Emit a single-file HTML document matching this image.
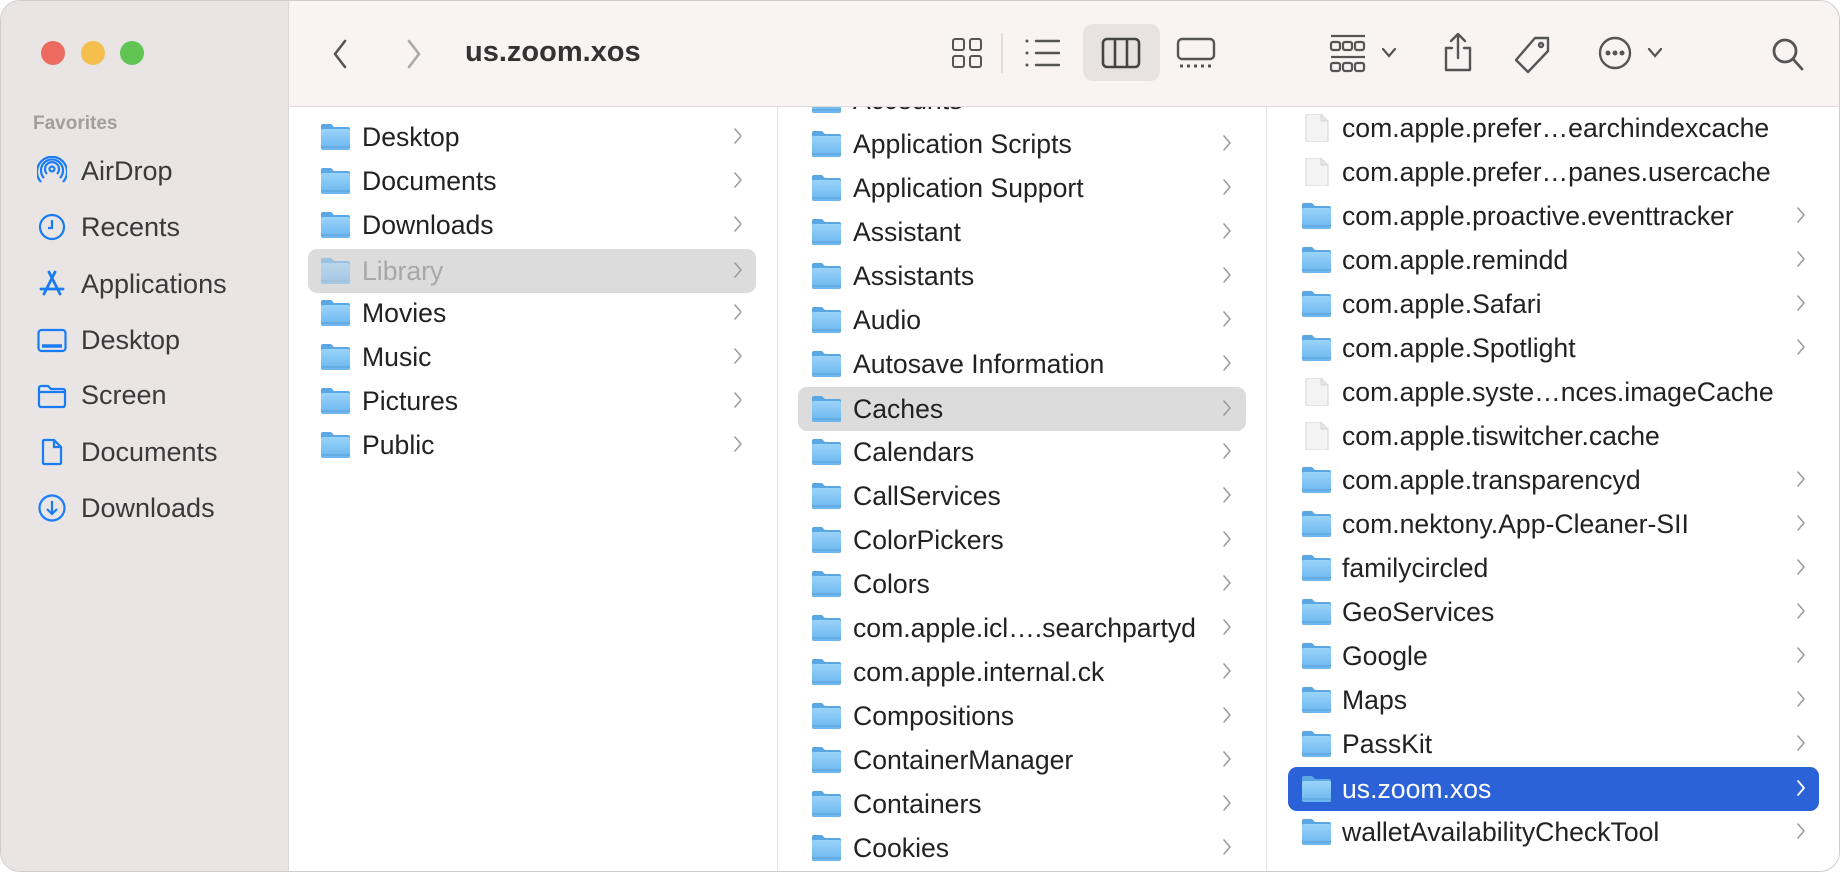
<!DOCTYPE html>
<html><head><meta charset="utf-8"><style>
*{margin:0;padding:0;box-sizing:border-box}
body{width:1840px;height:872px;background:#fff;font-family:"Liberation Sans",sans-serif;overflow:hidden;position:relative}
.win{position:absolute;left:0;top:0;width:1840px;height:872px;border-radius:20px;overflow:hidden;border:1px solid #cfcccb;background:#fff}
.side{position:absolute;left:0;top:0;width:288px;height:872px;background:#e8e5e4;border-right:1px solid #dad7d6}
.tl{position:absolute;top:40px;width:24px;height:24px;border-radius:50%}
.fav{position:absolute;left:32px;top:112px;font-size:19px;color:#a19e9d;font-weight:bold}
.si{position:absolute;left:36px;height:40px;display:flex;align-items:center;font-size:27px;color:#3a3a3a}
.si svg{width:30px;height:30px;margin-right:14px}
.tb{position:absolute;left:288px;top:0;right:0;height:106px;background:#f7f4f3;border-bottom:1px solid #dedbda}
.ic{position:absolute}
.col{position:absolute;top:106px;bottom:0;border-right:1px solid #e4e4e4;overflow:hidden}
.r{position:absolute;height:44px;display:flex;align-items:center;font-size:26.6px;color:#222}
.r .f{position:absolute;width:31px;height:28px;top:8px}
.r .t{position:absolute}
.r .c{position:absolute;top:12px;width:10px;height:18px}
.sel{background:#dcdcdc;border-radius:9px}
.blue{background:#2b62d8;border-radius:9px;color:#fff}
</style></head><body>
<svg width="0" height="0" style="position:absolute">
<defs>
<linearGradient id="fg" x1="0" y1="0" x2="0" y2="1"><stop offset="0" stop-color="#9ad3fa"/><stop offset="1" stop-color="#6ab6ee"/></linearGradient>
<symbol id="fold" viewBox="0 0 31 28"><path d="M1 3a2 2 0 0 1 2-2h8l3 3h14a2 2 0 0 1 2 2v19a2 2 0 0 1-2 2H3a2 2 0 0 1-2-2z" fill="#5aa7e4"/><path d="M1 8a2 2 0 0 1 2-2h25a2 2 0 0 1 2 2v17a2 2 0 0 1-2 2H3a2 2 0 0 1-2-2z" fill="url(#fg)"/><path d="M1 24h29" stroke="#5a9ed8" stroke-width="1"/></symbol>
<symbol id="doc" viewBox="0 0 31 28"><path d="M5 0h15l7 7v21H5z" fill="#f3f3f3" stroke="#d6d6d6"/><path d="M20 0v7h7" fill="#e4e4e4" stroke="#d6d6d6"/></symbol>
<symbol id="chev" viewBox="0 0 10 18"><path d="M2 2l6 7-6 7" fill="none" stroke="#9a9a9a" stroke-width="1.5" stroke-linecap="round" stroke-linejoin="round"/></symbol>
<symbol id="chevw" viewBox="0 0 10 18"><path d="M2 2l6 7-6 7" fill="none" stroke="#fff" stroke-width="1.8" stroke-linecap="round" stroke-linejoin="round"/></symbol>
</defs></svg>
<div class="win">
<div class="side">
<div class="tl" style="left:40px;background:#ec6a5e"></div>
<div class="tl" style="left:80px;background:#f4bf4f"></div>
<div class="tl" style="left:119px;background:#61c554"></div>
<div class="fav">Favorites</div>
<div class="si" style="top:150px"><svg viewBox="0 0 30 30" fill="none" stroke="#1a7cf4" stroke-width="2.2"><circle cx="15" cy="13" r="2.5"/><path d="M10 18a7 7 0 1 1 10 0M7 22a11 11 0 1 1 16 0M4 26a15 15 0 1 1 22 0"/></svg>AirDrop</div>
<div class="si" style="top:206px"><svg viewBox="0 0 30 30" fill="none" stroke="#1a7cf4" stroke-width="2.2"><circle cx="15" cy="15" r="12"/><path d="M15 8v8h-4"/></svg>Recents</div>
<div class="si" style="top:263px"><svg viewBox="0 0 30 30" fill="none" stroke="#1a7cf4" stroke-width="2.8" stroke-linecap="round"><path d="M12 3l11 22M18 3L7 25M4 20h22"/></svg>Applications</div>
<div class="si" style="top:319px"><svg viewBox="0 0 30 30" fill="none" stroke="#1a7cf4" stroke-width="2.2"><rect x="1.5" y="5" width="27" height="21" rx="3"/><path d="M5 21h20" stroke-width="3.5"/></svg>Desktop</div>
<div class="si" style="top:374px"><svg viewBox="0 0 30 30" fill="none" stroke="#1a7cf4" stroke-width="2.2"><path d="M2 8a2 2 0 0 1 2-2h7l3 3h12a2 2 0 0 1 2 2v14a2 2 0 0 1-2 2H4a2 2 0 0 1-2-2zM2 12h26"/></svg>Screen</div>
<div class="si" style="top:431px"><svg viewBox="0 0 30 30" fill="none" stroke="#1a7cf4" stroke-width="2.2"><path d="M7 3h10l7 7v16a1 1 0 0 1-1 1H7a1 1 0 0 1-1-1V4a1 1 0 0 1 1-1zM17 3v7h7"/></svg>Documents</div>
<div class="si" style="top:487px"><svg viewBox="0 0 30 30" fill="none" stroke="#1a7cf4" stroke-width="2.2"><circle cx="15" cy="15" r="12.5"/><path d="M15 8v13M10 16l5 5 5-5"/></svg>Downloads</div>
</div>
<div class="tb">
<svg class="ic" style="left:43px;top:38px" width="16" height="30" viewBox="0 0 16 30"><path d="M13 2L3 15l10 13" fill="none" stroke="#555" stroke-width="2.6" stroke-linecap="round" stroke-linejoin="round"/></svg>
<svg class="ic" style="left:117px;top:38px" width="16" height="30" viewBox="0 0 16 30"><path d="M3 2l10 13L3 28" fill="none" stroke="#aaa" stroke-width="2.6" stroke-linecap="round" stroke-linejoin="round"/></svg>
<div class="ic" style="left:176px;top:35px;font-size:29px;font-weight:bold;color:#333">us.zoom.xos</div>
<svg class="ic" style="left:662px;top:36px" width="32" height="32" viewBox="0 0 32 32" fill="none" stroke="#555" stroke-width="2"><rect x="2" y="2" width="11" height="11" rx="2"/><rect x="19" y="2" width="11" height="11" rx="2"/><rect x="2" y="19" width="11" height="11" rx="2"/><rect x="19" y="19" width="11" height="11" rx="2"/></svg>
<div class="ic" style="left:712px;top:32px;width:2px;height:40px;background:#e0dddc"></div>
<svg class="ic" style="left:736px;top:36px" width="36" height="32" viewBox="0 0 36 32" stroke="#555" stroke-width="3" stroke-linecap="round"><path d="M2 4h0M2 16h0M2 28h0"/><path d="M11 4h23M11 16h23M11 28h23" stroke-width="2.4"/></svg>
<div class="ic" style="left:794px;top:23px;width:77px;height:57px;background:#e6e3e2;border-radius:10px"></div>
<svg class="ic" style="left:812px;top:36px" width="40" height="32" viewBox="0 0 40 32" fill="none" stroke="#444" stroke-width="2.6"><rect x="2" y="2" width="36" height="28" rx="4"/><path d="M14 2v28M26 2v28"/></svg>
<svg class="ic" style="left:887px;top:36px" width="40" height="32" viewBox="0 0 40 32" fill="none" stroke="#555" stroke-width="2.4"><rect x="2" y="2" width="36" height="20" rx="4"/><path d="M4 29h3M11 29h3M18 29h3M25 29h3M32 29h3" stroke-width="3"/></svg>
<svg class="ic" style="left:1040px;top:32px" width="40" height="40" viewBox="0 0 40 40" fill="none" stroke="#555" stroke-width="2.2"><path d="M2 3h34"/><rect x="2" y="9" width="9" height="8" rx="2"/><rect x="14" y="9" width="9" height="8" rx="2"/><rect x="26" y="9" width="9" height="8" rx="2"/><path d="M2 24h34"/><rect x="2" y="30" width="9" height="8" rx="2"/><rect x="14" y="30" width="9" height="8" rx="2"/><rect x="26" y="30" width="9" height="8" rx="2"/></svg>
<svg class="ic" style="left:1092px;top:46px" width="16" height="12" viewBox="0 0 16 12"><path d="M2 2l6 7 6-7" fill="none" stroke="#555" stroke-width="2.2" stroke-linecap="round"/></svg>
<svg class="ic" style="left:1152px;top:30px" width="34" height="42" viewBox="0 0 34 42" fill="none" stroke="#555" stroke-width="2.4" stroke-linecap="round" stroke-linejoin="round"><path d="M17 3v24M10 10l7-7 7 7M11 17H5v22h24V17h-6"/></svg>
<svg class="ic" style="left:1224px;top:34px" width="40" height="40" viewBox="0 0 40 40" fill="none" stroke="#555" stroke-width="2.4" stroke-linejoin="round"><path d="M22 3h13v13L15 37 3 25z"/><circle cx="28" cy="10" r="2"/></svg>
<svg class="ic" style="left:1308px;top:34px" width="36" height="36" viewBox="0 0 36 36" fill="none" stroke="#555" stroke-width="2.4"><circle cx="18" cy="18" r="15"/><circle cx="11" cy="18" r="1.3" fill="#555"/><circle cx="18" cy="18" r="1.3" fill="#555"/><circle cx="25" cy="18" r="1.3" fill="#555"/></svg>
<svg class="ic" style="left:1358px;top:46px" width="16" height="12" viewBox="0 0 16 12"><path d="M2 2l6 7 6-7" fill="none" stroke="#555" stroke-width="2.2" stroke-linecap="round"/></svg>
<svg class="ic" style="left:1482px;top:36px" width="34" height="34" viewBox="0 0 34 34" fill="none" stroke="#555" stroke-width="2.8" stroke-linecap="round"><circle cx="14" cy="14" r="11"/><path d="M22 22l9 10"/></svg>
</div>

<div class="col" style="left:288px;width:489px">
<div class="r sel" style="left:19px;width:448px;top:142px"></div>
<div class="r" style="left:0;width:489px;top:8px"><svg class="f" style="left:31px"><use href="#fold"/></svg><span class="t" style="left:73px">Desktop</span><svg class="c" style="left:444px"><use href="#chev"/></svg></div>
<div class="r" style="left:0;width:489px;top:52px"><svg class="f" style="left:31px"><use href="#fold"/></svg><span class="t" style="left:73px">Documents</span><svg class="c" style="left:444px"><use href="#chev"/></svg></div>
<div class="r" style="left:0;width:489px;top:96px"><svg class="f" style="left:31px"><use href="#fold"/></svg><span class="t" style="left:73px">Downloads</span><svg class="c" style="left:444px"><use href="#chev"/></svg></div>
<div class="r" style="left:0;width:489px;top:142px"><svg class="f" style="left:31px;opacity:.5"><use href="#fold"/></svg><span class="t" style="left:73px;color:#a8a8a8">Library</span><svg class="c" style="left:444px"><use href="#chev"/></svg></div>
<div class="r" style="left:0;width:489px;top:184px"><svg class="f" style="left:31px"><use href="#fold"/></svg><span class="t" style="left:73px">Movies</span><svg class="c" style="left:444px"><use href="#chev"/></svg></div>
<div class="r" style="left:0;width:489px;top:228px"><svg class="f" style="left:31px"><use href="#fold"/></svg><span class="t" style="left:73px">Music</span><svg class="c" style="left:444px"><use href="#chev"/></svg></div>
<div class="r" style="left:0;width:489px;top:272px"><svg class="f" style="left:31px"><use href="#fold"/></svg><span class="t" style="left:73px">Pictures</span><svg class="c" style="left:444px"><use href="#chev"/></svg></div>
<div class="r" style="left:0;width:489px;top:316px"><svg class="f" style="left:31px"><use href="#fold"/></svg><span class="t" style="left:73px">Public</span><svg class="c" style="left:444px"><use href="#chev"/></svg></div>
</div>

<div class="col" style="left:777px;width:489px">
<div class="r sel" style="left:20px;width:448px;top:280px"></div>
<div class="r" style="top:-29px;width:489px"><svg class="f" style="left:33px"><use href="#fold"/></svg><span class="t" style="left:75px">Accounts</span><svg class="c" style="left:444px"><use href="#chev"/></svg></div>
<div class="r" style="top:15px;width:489px"><svg class="f" style="left:33px"><use href="#fold"/></svg><span class="t" style="left:75px">Application Scripts</span><svg class="c" style="left:444px"><use href="#chev"/></svg></div>
<div class="r" style="top:59px;width:489px"><svg class="f" style="left:33px"><use href="#fold"/></svg><span class="t" style="left:75px">Application Support</span><svg class="c" style="left:444px"><use href="#chev"/></svg></div>
<div class="r" style="top:103px;width:489px"><svg class="f" style="left:33px"><use href="#fold"/></svg><span class="t" style="left:75px">Assistant</span><svg class="c" style="left:444px"><use href="#chev"/></svg></div>
<div class="r" style="top:147px;width:489px"><svg class="f" style="left:33px"><use href="#fold"/></svg><span class="t" style="left:75px">Assistants</span><svg class="c" style="left:444px"><use href="#chev"/></svg></div>
<div class="r" style="top:191px;width:489px"><svg class="f" style="left:33px"><use href="#fold"/></svg><span class="t" style="left:75px">Audio</span><svg class="c" style="left:444px"><use href="#chev"/></svg></div>
<div class="r" style="top:235px;width:489px"><svg class="f" style="left:33px"><use href="#fold"/></svg><span class="t" style="left:75px">Autosave Information</span><svg class="c" style="left:444px"><use href="#chev"/></svg></div>
<div class="r" style="top:280px;width:489px"><svg class="f" style="left:33px"><use href="#fold"/></svg><span class="t" style="left:75px">Caches</span><svg class="c" style="left:444px"><use href="#chev"/></svg></div>
<div class="r" style="top:323px;width:489px"><svg class="f" style="left:33px"><use href="#fold"/></svg><span class="t" style="left:75px">Calendars</span><svg class="c" style="left:444px"><use href="#chev"/></svg></div>
<div class="r" style="top:367px;width:489px"><svg class="f" style="left:33px"><use href="#fold"/></svg><span class="t" style="left:75px">CallServices</span><svg class="c" style="left:444px"><use href="#chev"/></svg></div>
<div class="r" style="top:411px;width:489px"><svg class="f" style="left:33px"><use href="#fold"/></svg><span class="t" style="left:75px">ColorPickers</span><svg class="c" style="left:444px"><use href="#chev"/></svg></div>
<div class="r" style="top:455px;width:489px"><svg class="f" style="left:33px"><use href="#fold"/></svg><span class="t" style="left:75px">Colors</span><svg class="c" style="left:444px"><use href="#chev"/></svg></div>
<div class="r" style="top:499px;width:489px"><svg class="f" style="left:33px"><use href="#fold"/></svg><span class="t" style="left:75px">com.apple.icl….searchpartyd</span><svg class="c" style="left:444px"><use href="#chev"/></svg></div>
<div class="r" style="top:543px;width:489px"><svg class="f" style="left:33px"><use href="#fold"/></svg><span class="t" style="left:75px">com.apple.internal.ck</span><svg class="c" style="left:444px"><use href="#chev"/></svg></div>
<div class="r" style="top:587px;width:489px"><svg class="f" style="left:33px"><use href="#fold"/></svg><span class="t" style="left:75px">Compositions</span><svg class="c" style="left:444px"><use href="#chev"/></svg></div>
<div class="r" style="top:631px;width:489px"><svg class="f" style="left:33px"><use href="#fold"/></svg><span class="t" style="left:75px">ContainerManager</span><svg class="c" style="left:444px"><use href="#chev"/></svg></div>
<div class="r" style="top:675px;width:489px"><svg class="f" style="left:33px"><use href="#fold"/></svg><span class="t" style="left:75px">Containers</span><svg class="c" style="left:444px"><use href="#chev"/></svg></div>
<div class="r" style="top:719px;width:489px"><svg class="f" style="left:33px"><use href="#fold"/></svg><span class="t" style="left:75px">Cookies</span><svg class="c" style="left:444px"><use href="#chev"/></svg></div>
</div>

<div class="col" style="left:1266px;width:574px;border-right:none">
<div class="r blue" style="left:21px;width:531px;top:660px"></div>
<div class="r" style="top:-1px;width:574px"><svg class="f" style="left:34px"><use href="#doc"/></svg><span class="t" style="left:75px">com.apple.prefer…earchindexcache</span></div>
<div class="r" style="top:43px;width:574px"><svg class="f" style="left:34px"><use href="#doc"/></svg><span class="t" style="left:75px">com.apple.prefer…panes.usercache</span></div>
<div class="r" style="top:87px;width:574px"><svg class="f" style="left:34px"><use href="#fold"/></svg><span class="t" style="left:75px">com.apple.proactive.eventtracker</span><svg class="c" style="left:529px"><use href="#chev"/></svg></div>
<div class="r" style="top:131px;width:574px"><svg class="f" style="left:34px"><use href="#fold"/></svg><span class="t" style="left:75px">com.apple.remindd</span><svg class="c" style="left:529px"><use href="#chev"/></svg></div>
<div class="r" style="top:175px;width:574px"><svg class="f" style="left:34px"><use href="#fold"/></svg><span class="t" style="left:75px">com.apple.Safari</span><svg class="c" style="left:529px"><use href="#chev"/></svg></div>
<div class="r" style="top:219px;width:574px"><svg class="f" style="left:34px"><use href="#fold"/></svg><span class="t" style="left:75px">com.apple.Spotlight</span><svg class="c" style="left:529px"><use href="#chev"/></svg></div>
<div class="r" style="top:263px;width:574px"><svg class="f" style="left:34px"><use href="#doc"/></svg><span class="t" style="left:75px">com.apple.syste…nces.imageCache</span></div>
<div class="r" style="top:307px;width:574px"><svg class="f" style="left:34px"><use href="#doc"/></svg><span class="t" style="left:75px">com.apple.tiswitcher.cache</span></div>
<div class="r" style="top:351px;width:574px"><svg class="f" style="left:34px"><use href="#fold"/></svg><span class="t" style="left:75px">com.apple.transparencyd</span><svg class="c" style="left:529px"><use href="#chev"/></svg></div>
<div class="r" style="top:395px;width:574px"><svg class="f" style="left:34px"><use href="#fold"/></svg><span class="t" style="left:75px">com.nektony.App-Cleaner-SII</span><svg class="c" style="left:529px"><use href="#chev"/></svg></div>
<div class="r" style="top:439px;width:574px"><svg class="f" style="left:34px"><use href="#fold"/></svg><span class="t" style="left:75px">familycircled</span><svg class="c" style="left:529px"><use href="#chev"/></svg></div>
<div class="r" style="top:483px;width:574px"><svg class="f" style="left:34px"><use href="#fold"/></svg><span class="t" style="left:75px">GeoServices</span><svg class="c" style="left:529px"><use href="#chev"/></svg></div>
<div class="r" style="top:527px;width:574px"><svg class="f" style="left:34px"><use href="#fold"/></svg><span class="t" style="left:75px">Google</span><svg class="c" style="left:529px"><use href="#chev"/></svg></div>
<div class="r" style="top:571px;width:574px"><svg class="f" style="left:34px"><use href="#fold"/></svg><span class="t" style="left:75px">Maps</span><svg class="c" style="left:529px"><use href="#chev"/></svg></div>
<div class="r" style="top:615px;width:574px"><svg class="f" style="left:34px"><use href="#fold"/></svg><span class="t" style="left:75px">PassKit</span><svg class="c" style="left:529px"><use href="#chev"/></svg></div>
<div class="r" style="top:660px;width:574px;color:#fff"><svg class="f" style="left:34px"><use href="#fold"/></svg><span class="t" style="left:75px">us.zoom.xos</span><svg class="c" style="left:529px"><use href="#chevw"/></svg></div>
<div class="r" style="top:703px;width:574px"><svg class="f" style="left:34px"><use href="#fold"/></svg><span class="t" style="left:75px">walletAvailabilityCheckTool</span><svg class="c" style="left:529px"><use href="#chev"/></svg></div>
</div>
</div>
</body></html>
